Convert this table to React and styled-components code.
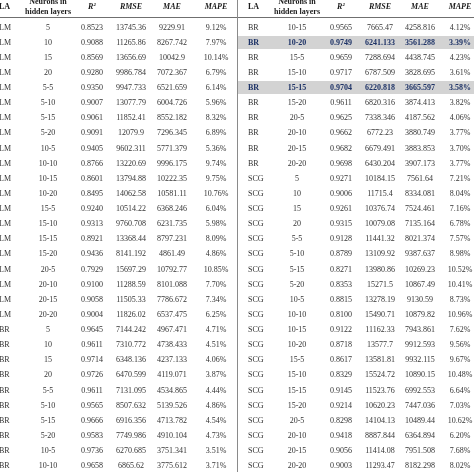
import React from "react";
import styled, { createGlobalStyle } from "styled-components";

const Global = createGlobalStyle`
  html, body { margin: 0; padding: 0; background: #ffffff; }
  body { width: 474px; height: 472px; overflow: hidden; }
`;

const Page = styled.div`
  width: 474px;
  height: 472px;
  overflow: hidden;
  background: #fff;
  font-family: "Liberation Serif", "Times New Roman", serif;
  color: #2b2b2b;
  will-change: transform;
  -webkit-font-smoothing: antialiased;
`;

const Sheet = styled.div`
  display: flex;
  margin-left: -11px;
  margin-top: -3px;
  width: 496px;
`;

const Half = styled.div`
  width: 248px;
  flex: none;
  display: flex;
  flex-direction: column;
  border-left: ${(p) => (p.$divided ? "1px solid #8a8a8a" : "none")};
  height: 480px;
`;

const leftCols = "36px 46px 42px 36px 46px 42px";
const rightCols = "36px 46px 42px 36px 44px 36px";

const HeaderRow = styled.div`
  display: grid;
  grid-template-columns: ${(p) => p.$cols};
  height: 20px;
  border-bottom: 1px solid #6f6f6f;
  align-items: center;
  font-weight: bold;
  font-size: 8px;
  line-height: 10px;
  color: #1c1c1c;
`;

const HeadCell = styled.div`
  text-align: ${(p) => (p.$left ? "left" : "center")};
  padding-left: ${(p) => (p.$left ? "10px" : "0")};
  font-style: ${(p) => (p.$italic ? "italic" : "normal")};
  white-space: nowrap;
`;

const Sup = styled.sup`
  font-size: 5px;
  vertical-align: 3px;
  line-height: 0;
`;

const Body = styled.div`
  padding-top: 1.5px;
  display: flex;
  flex-direction: column;
`;

const Row = styled.div`
  display: grid;
  grid-template-columns: ${(p) => p.$cols};
  box-sizing: border-box;
  height: 15.13px;
  padding: 1px 0;
  align-items: center;
  font-size: 8px;
  line-height: 13px;
  background: ${(p) => (p.$hl ? "#d3d3d3" : "transparent")};
  background-clip: content-box;
  color: ${(p) => (p.$hl ? "#1d3266" : "#333333")};
  font-weight: ${(p) => (p.$hl ? "bold" : "normal")};
`;

const Cell = styled.div`
  text-align: ${(p) => (p.$left ? "left" : "center")};
  padding-left: ${(p) => (p.$left ? "10px" : "0")};
  white-space: nowrap;
`;

const left = [
  ["LM", "5", "0.8523", "13745.36", "9229.91", "9.12%"],
  ["LM", "10", "0.9088", "11265.86", "8267.742", "7.97%"],
  ["LM", "15", "0.8569", "13656.69", "10042.9", "10.14%"],
  ["LM", "20", "0.9280", "9986.784", "7072.367", "6.79%"],
  ["LM", "5-5", "0.9350", "9947.733", "6521.659", "6.14%"],
  ["LM", "5-10", "0.9007", "13077.79", "6004.726", "5.96%"],
  ["LM", "5-15", "0.9061", "11852.41", "8552.182", "8.32%"],
  ["LM", "5-20", "0.9091", "12079.9", "7296.345", "6.89%"],
  ["LM", "10-5", "0.9405", "9602.311", "5771.379", "5.36%"],
  ["LM", "10-10", "0.8766", "13220.69", "9996.175", "9.74%"],
  ["LM", "10-15", "0.8601", "13794.88", "10222.35", "9.75%"],
  ["LM", "10-20", "0.8495", "14062.58", "10581.11", "10.76%"],
  ["LM", "15-5", "0.9240", "10514.22", "6368.246", "6.04%"],
  ["LM", "15-10", "0.9313", "9760.708", "6231.735", "5.98%"],
  ["LM", "15-15", "0.8921", "13368.44", "8797.231", "8.09%"],
  ["LM", "15-20", "0.9436", "8141.192", "4861.49", "4.86%"],
  ["LM", "20-5", "0.7929", "15697.29", "10792.77", "10.85%"],
  ["LM", "20-10", "0.9100", "11288.59", "8101.088", "7.70%"],
  ["LM", "20-15", "0.9058", "11505.33", "7786.672", "7.34%"],
  ["LM", "20-20", "0.9004", "11826.02", "6537.475", "6.25%"],
  ["BR", "5", "0.9645", "7144.242", "4967.471", "4.71%"],
  ["BR", "10", "0.9611", "7310.772", "4738.433", "4.51%"],
  ["BR", "15", "0.9714", "6348.136", "4237.133", "4.06%"],
  ["BR", "20", "0.9726", "6470.599", "4119.071", "3.87%"],
  ["BR", "5-5", "0.9611", "7131.095", "4534.865", "4.44%"],
  ["BR", "5-10", "0.9565", "8507.632", "5139.526", "4.86%"],
  ["BR", "5-15", "0.9666", "6916.356", "4713.782", "4.54%"],
  ["BR", "5-20", "0.9583", "7749.986", "4910.104", "4.73%"],
  ["BR", "10-5", "0.9736", "6270.685", "3751.341", "3.51%"],
  ["BR", "10-10", "0.9658", "6865.62", "3775.612", "3.71%"],
];

const right = [
  ["BR", "10-15", "0.9565", "7665.47", "4258.816", "4.12%"],
  ["BR", "10-20", "0.9749", "6241.133", "3561.288", "3.39%", true],
  ["BR", "15-5", "0.9659", "7288.694", "4438.745", "4.23%"],
  ["BR", "15-10", "0.9717", "6787.509", "3828.695", "3.61%"],
  ["BR", "15-15", "0.9704", "6220.818", "3665.597", "3.58%", true],
  ["BR", "15-20", "0.9611", "6820.316", "3874.413", "3.82%"],
  ["BR", "20-5", "0.9625", "7338.346", "4187.562", "4.06%"],
  ["BR", "20-10", "0.9662", "6772.23", "3880.749", "3.77%"],
  ["BR", "20-15", "0.9682", "6679.491", "3883.853", "3.70%"],
  ["BR", "20-20", "0.9698", "6430.204", "3907.173", "3.77%"],
  ["SCG", "5", "0.9271", "10184.15", "7561.64", "7.21%"],
  ["SCG", "10", "0.9006", "11715.4", "8334.081", "8.04%"],
  ["SCG", "15", "0.9261", "10376.74", "7524.461", "7.16%"],
  ["SCG", "20", "0.9315", "10079.08", "7135.164", "6.78%"],
  ["SCG", "5-5", "0.9128", "11441.32", "8021.374", "7.57%"],
  ["SCG", "5-10", "0.8789", "13109.92", "9387.637", "8.98%"],
  ["SCG", "5-15", "0.8271", "13980.86", "10269.23", "10.52%"],
  ["SCG", "5-20", "0.8353", "15271.5", "10867.49", "10.41%"],
  ["SCG", "10-5", "0.8815", "13278.19", "9130.59", "8.73%"],
  ["SCG", "10-10", "0.8100", "15490.71", "10879.82", "10.96%"],
  ["SCG", "10-15", "0.9122", "11162.33", "7943.861", "7.62%"],
  ["SCG", "10-20", "0.8718", "13577.7", "9912.593", "9.56%"],
  ["SCG", "15-5", "0.8617", "13581.81", "9932.115", "9.67%"],
  ["SCG", "15-10", "0.8329", "15524.72", "10890.15", "10.48%"],
  ["SCG", "15-15", "0.9145", "11523.76", "6992.553", "6.64%"],
  ["SCG", "15-20", "0.9214", "10620.23", "7447.036", "7.03%"],
  ["SCG", "20-5", "0.8298", "14104.13", "10489.44", "10.62%"],
  ["SCG", "20-10", "0.9418", "8887.844", "6364.894", "6.20%"],
  ["SCG", "20-15", "0.9056", "11414.08", "7951.508", "7.68%"],
  ["SCG", "20-20", "0.9003", "11293.47", "8182.298", "8.02%"],
];

function Header({ cols }) {
  return (
    <HeaderRow $cols={cols}>
      <HeadCell $left>LA</HeadCell>
      <HeadCell>
        Neurons in
        <br />
        hidden layers
      </HeadCell>
      <HeadCell $italic>
        R<Sup>2</Sup>
      </HeadCell>
      <HeadCell $italic>RMSE</HeadCell>
      <HeadCell $italic>MAE</HeadCell>
      <HeadCell $italic>MAPE</HeadCell>
    </HeaderRow>
  );
}

function Panel({ rows, divided, cols }) {
  return (
    <Half $divided={divided}>
      <Header cols={cols} />
      <Body>
        {rows.map((r, i) => (
          <Row key={i} $hl={!!r[6]} $cols={cols}>
            <Cell $left>{r[0]}</Cell>
            <Cell>{r[1]}</Cell>
            <Cell>{r[2]}</Cell>
            <Cell>{r[3]}</Cell>
            <Cell>{r[4]}</Cell>
            <Cell>{r[5]}</Cell>
          </Row>
        ))}
      </Body>
    </Half>
  );
}

export default function App() {
  return (
    <Page>
      <Global />
      <Sheet>
        <Panel rows={left} cols={leftCols} />
        <Panel rows={right} cols={rightCols} divided />
      </Sheet>
    </Page>
  );
}
